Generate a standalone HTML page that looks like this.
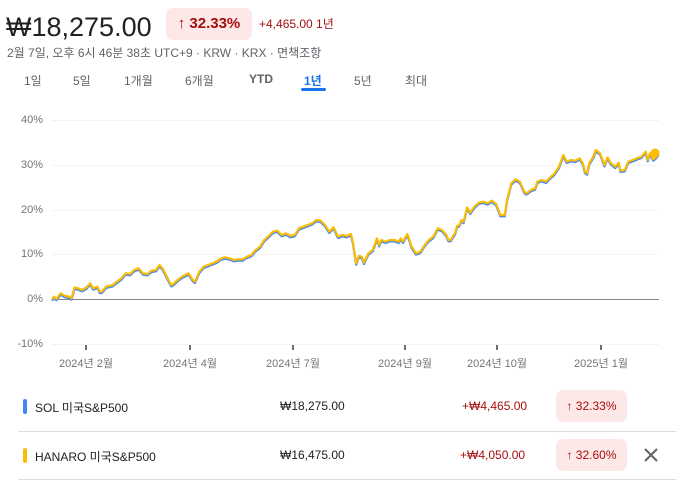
<!DOCTYPE html>
<html><head><meta charset="utf-8"><style>
body{margin:0;width:676px;height:484px;background:#fff;font-family:"Liberation Sans","Noto Sans CJK KR",sans-serif;position:relative;overflow:hidden;color:#202124}
.a{position:absolute;white-space:nowrap}
.tab{position:absolute;top:72px;font-size:12px;color:#5f6368}
.yl{position:absolute;right:633px;font-size:11px;color:#70757a}
.xl{position:absolute;top:355px;font-size:11px;color:#70757a;transform:translateX(-50%)}
.badge{position:absolute;background:#fce8e6;border-radius:7px;color:#a50e0e;font-size:12px;text-align:center}
</style></head><body>
<div class="a" style="left:6px;top:12px;font-size:27px;color:#202124">₩18,275.00</div>
<div class="badge" style="left:166px;top:8px;width:86px;height:32px;line-height:32px;font-size:15px;font-weight:bold">↑ 32.33%</div>
<div class="a" style="left:259px;top:15px;font-size:12px;color:#a50e0e">+4,465.00 1년</div>
<div class="a" style="left:7px;top:44px;font-size:12px;color:#5f6368">2월 7일, 오후 6시 46분 38초 UTC+9 · KRW · KRX · 면책조항</div>
<div class="tab" style="left:24px">1일</div>
<div class="tab" style="left:73px">5일</div>
<div class="tab" style="left:124px">1개월</div>
<div class="tab" style="left:185px">6개월</div>
<div class="tab" style="left:249px;font-weight:bold">YTD</div>
<div class="tab" style="left:304px;color:#1a73e8;font-weight:bold">1년</div>
<div class="tab" style="left:354px">5년</div>
<div class="tab" style="left:405px">최대</div>
<div class="a" style="left:301px;top:88px;width:25px;height:3px;background:#1a73e8;border-radius:2px"></div>

<div class="yl" style="top:114px">40%</div>
<div class="yl" style="top:159px">30%</div>
<div class="yl" style="top:204px">20%</div>
<div class="yl" style="top:248px">10%</div>
<div class="yl" style="top:293px">0%</div>
<div class="yl" style="top:338px">-10%</div>
<svg class="a" style="left:0;top:0" width="676" height="380">
<defs><path id="p" d="M120,598L125,590L130,597L140,580L150,588L160,590L165,595L172,562L180,565L190,570L200,562L208,550L215,565L225,560L230,575L235,575L245,560L260,555L270,545L280,535L290,520L300,522L310,510L320,505L330,520L340,522L350,512L360,510L368,495L375,505L385,530L395,555L400,552L410,540L420,530L435,520L445,540L450,545L460,515L470,500L480,495L490,490L500,485L510,475L520,472L530,475L540,480L550,478L560,478L570,470L580,465L590,450L600,440L610,420L620,408L630,395L640,392L650,405L660,400L670,408L680,405L690,385L700,380L710,375L720,370L730,360L740,362L750,375L760,395L770,382L780,410L790,405L800,408L810,402L815,430L822,490L828,468L835,470L840,488L850,460L860,450L870,415L875,435L880,420L890,425L900,420L910,420L920,425L925,415L930,425L940,402L945,420L950,440L960,460L970,455L980,435L990,420L1000,410L1010,385L1020,390L1030,405L1035,420L1040,420L1050,400L1055,378L1060,375L1065,360L1070,365L1078,322L1085,338L1095,320L1105,308L1115,305L1125,310L1135,302L1145,312L1155,345L1165,345L1170,300L1180,250L1190,238L1200,245L1210,275L1215,280L1225,270L1235,265L1240,245L1250,240L1260,245L1270,232L1280,220L1290,200L1300,165L1308,185L1318,180L1328,182L1338,175L1345,190L1350,215L1355,220L1360,190L1370,168L1375,150L1385,160L1395,195L1402,172L1410,190L1420,200L1428,188L1432,212L1442,210L1450,185L1460,180L1470,175L1480,170L1490,155L1495,180L1500,160L1508,178L1515,170L1520,160" vector-effect="non-scaling-stroke"/></defs>
<g stroke="#f1f3f4" stroke-width="1">
<line x1="52" y1="120.5" x2="659" y2="120.5"/><line x1="52" y1="165.5" x2="659" y2="165.5"/><line x1="52" y1="210.5" x2="659" y2="210.5"/><line x1="52" y1="254.5" x2="659" y2="254.5"/><line x1="52" y1="344.5" x2="659" y2="344.5"/></g>
<line x1="52" y1="299.5" x2="659" y2="299.5" stroke="#80868b" stroke-width="1"/>
<g stroke="#3c4043" stroke-width="1.5"><line x1="86" y1="345" x2="86" y2="350"/><line x1="190" y1="345" x2="190" y2="350"/><line x1="293" y1="345" x2="293" y2="350"/><line x1="405" y1="345" x2="405" y2="350"/><line x1="497" y1="345" x2="497" y2="350"/><line x1="601" y1="345" x2="601" y2="350"/></g>
<g transform="translate(0,100) scale(0.4333,0.3333)" fill="none" stroke-linejoin="round" stroke-width="2.2">
<use href="#p" transform="translate(0,4)" stroke="#4285f4"/>
<use href="#p" stroke="#fbbc04"/>
</g>
<circle cx="655" cy="153" r="4.5" fill="#fbbc04"/>
</svg>
<div class="xl" style="left:86px">2024년 2월</div>
<div class="xl" style="left:190px">2024년 4월</div>
<div class="xl" style="left:293px">2024년 7월</div>
<div class="xl" style="left:405px">2024년 9월</div>
<div class="xl" style="left:497px">2024년 10월</div>
<div class="xl" style="left:601px">2025년 1월</div>

<div class="a" style="left:23px;top:399px;width:4px;height:15px;background:#4285f4;border-radius:2px"></div>
<div class="a" style="left:35px;top:399px;font-size:12px">SOL 미국S&amp;P500</div>
<div class="a" style="left:280px;top:399px;font-size:12px">₩18,275.00</div>
<div class="a" style="left:462px;top:399px;font-size:12px;color:#a50e0e">+₩4,465.00</div>
<div class="badge" style="left:556px;top:390px;width:71px;height:32px;line-height:32px">↑ 32.33%</div>
<div class="a" style="left:18px;top:431px;width:658px;height:1px;background:#dadce0"></div>
<div class="a" style="left:23px;top:448px;width:4px;height:15px;background:#fbbc04;border-radius:2px"></div>
<div class="a" style="left:35px;top:448px;font-size:12px">HANARO 미국S&amp;P500</div>
<div class="a" style="left:280px;top:448px;font-size:12px">₩16,475.00</div>
<div class="a" style="left:460px;top:448px;font-size:12px;color:#a50e0e">+₩4,050.00</div>
<div class="badge" style="left:556px;top:439px;width:71px;height:32px;line-height:32px">↑ 32.60%</div>
<svg class="a" style="left:644px;top:448px" width="14" height="14"><path d="M1,1L13,13M13,1L1,13" stroke="#5f6368" stroke-width="2"/></svg>
<div class="a" style="left:18px;top:479px;width:658px;height:1px;background:#dadce0"></div>
</body></html>
